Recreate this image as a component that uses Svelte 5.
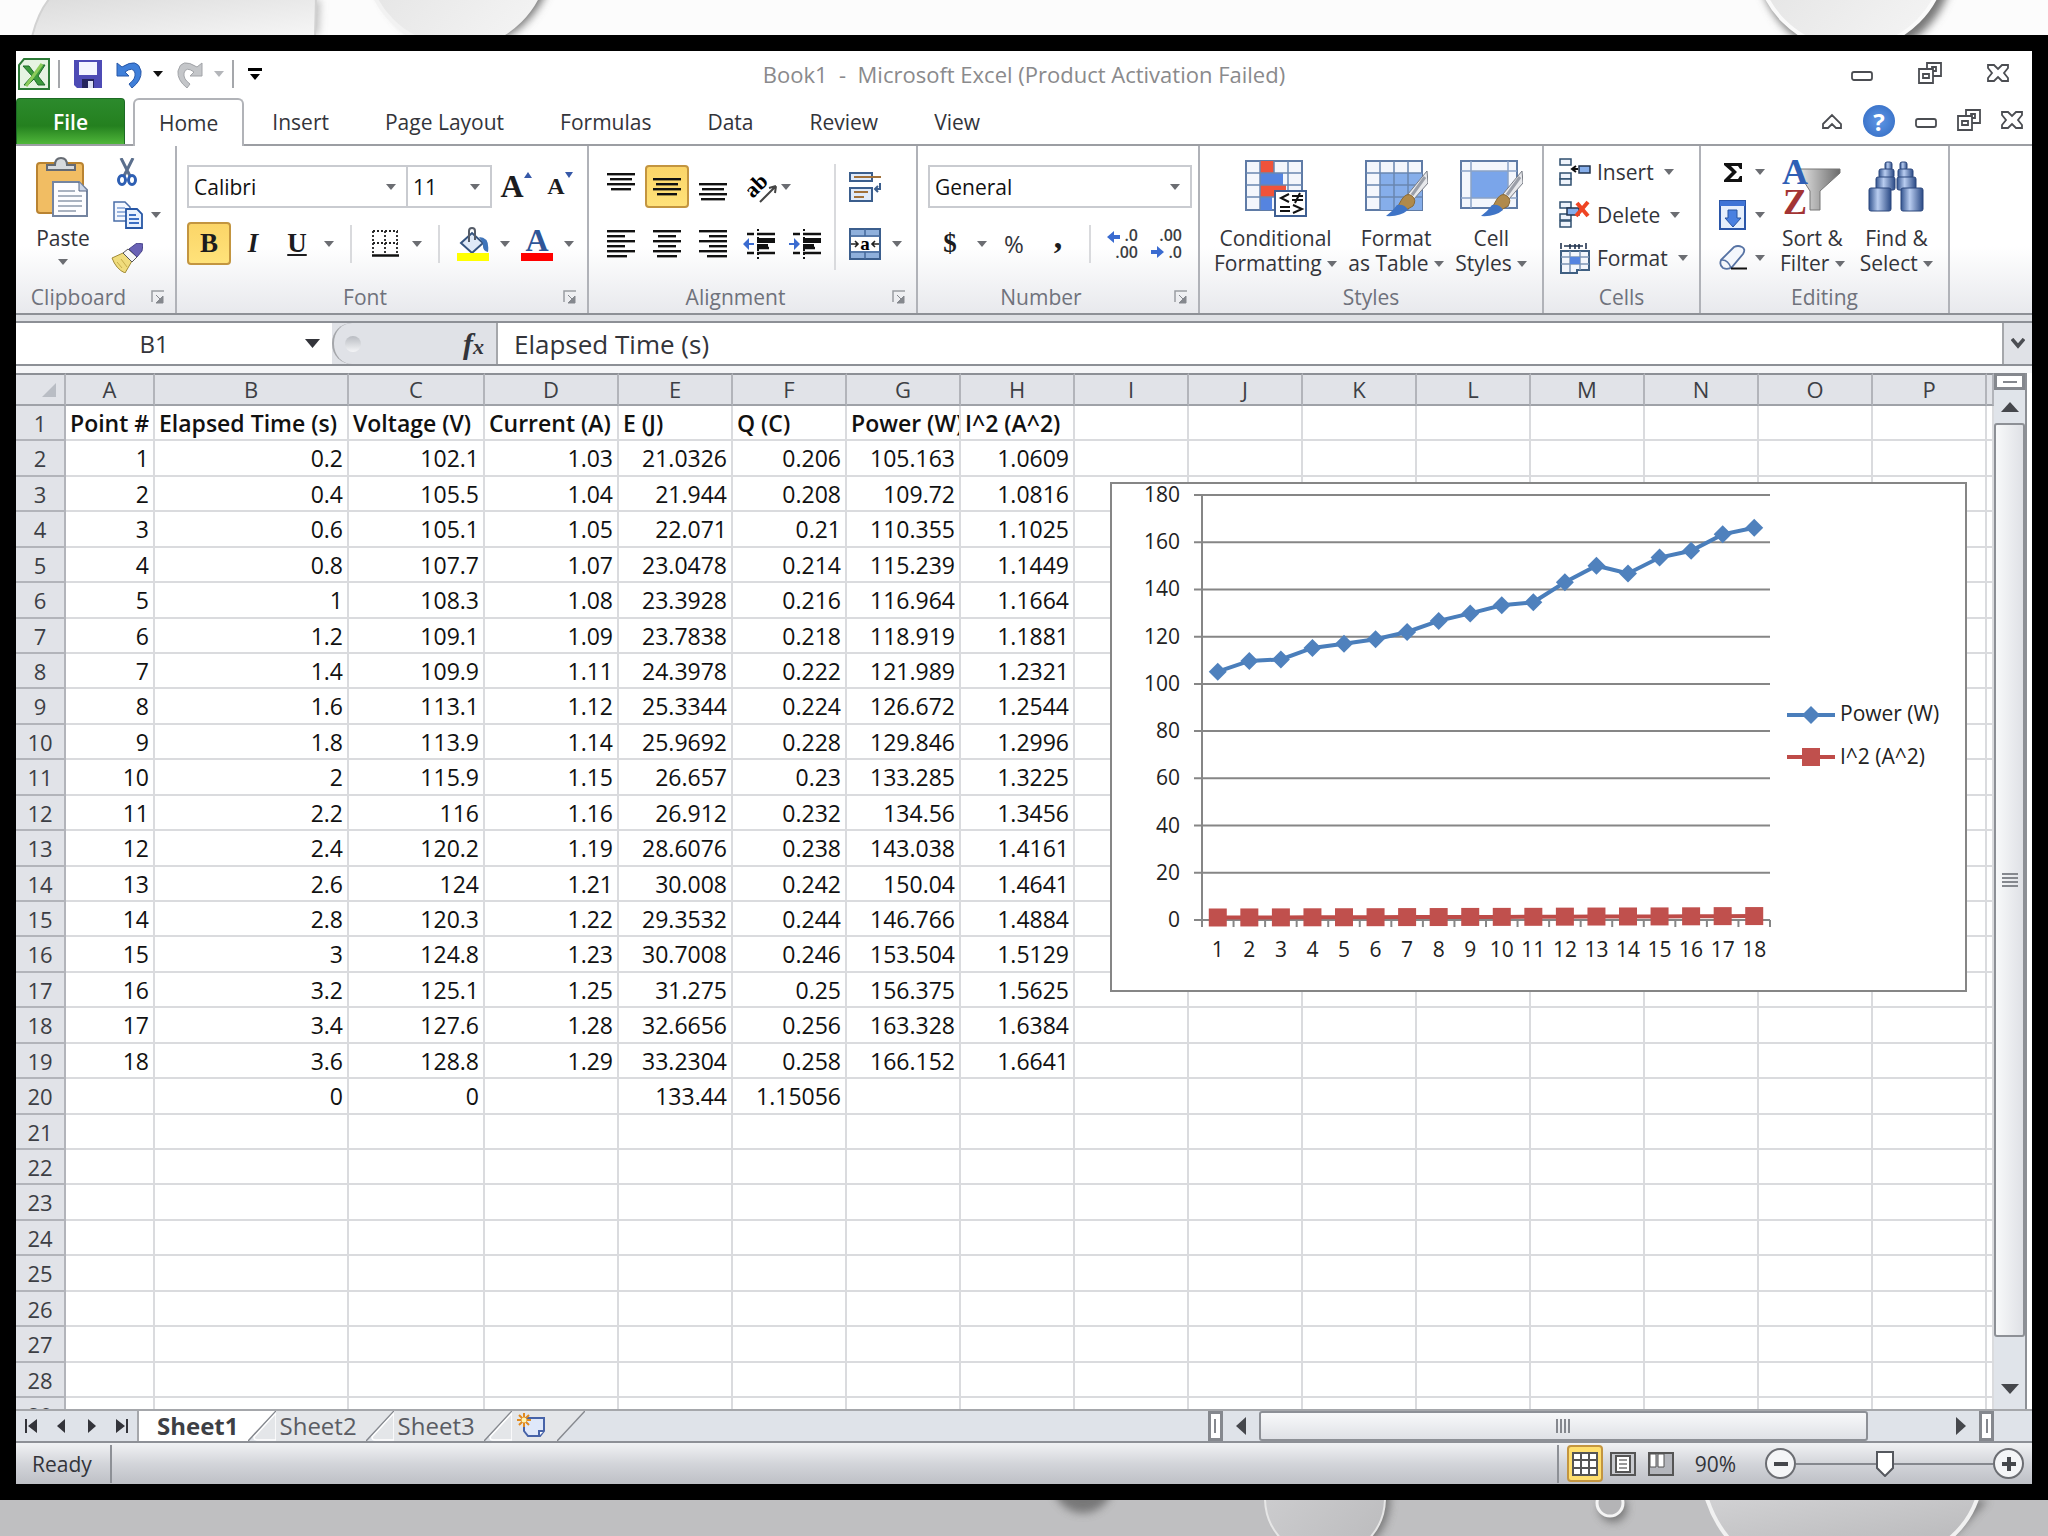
<script lang="ts">
	const menus = ['Home', 'Insert', 'Page Layout', 'Formulas', 'Data', 'Review', 'View'];
	const letters = 'ABCDEFGHIJKLMNOP'.split('');
	const headings = [
		'Point #',
		'Elapsed Time (s)',
		'Voltage (V)',
		'Current (A)',
		'E (J)',
		'Q (C)',
		'Power (W)',
		'I^2 (A^2)'
	];

	const readings: string[][] = [
		['1', '0.2', '102.1', '1.03', '21.0326', '0.206', '105.163', '1.0609'],
		['2', '0.4', '105.5', '1.04', '21.944', '0.208', '109.72', '1.0816'],
		['3', '0.6', '105.1', '1.05', '22.071', '0.21', '110.355', '1.1025'],
		['4', '0.8', '107.7', '1.07', '23.0478', '0.214', '115.239', '1.1449'],
		['5', '1', '108.3', '1.08', '23.3928', '0.216', '116.964', '1.1664'],
		['6', '1.2', '109.1', '1.09', '23.7838', '0.218', '118.919', '1.1881'],
		['7', '1.4', '109.9', '1.11', '24.3978', '0.222', '121.989', '1.2321'],
		['8', '1.6', '113.1', '1.12', '25.3344', '0.224', '126.672', '1.2544'],
		['9', '1.8', '113.9', '1.14', '25.9692', '0.228', '129.846', '1.2996'],
		['10', '2', '115.9', '1.15', '26.657', '0.23', '133.285', '1.3225'],
		['11', '2.2', '116', '1.16', '26.912', '0.232', '134.56', '1.3456'],
		['12', '2.4', '120.2', '1.19', '28.6076', '0.238', '143.038', '1.4161'],
		['13', '2.6', '124', '1.21', '30.008', '0.242', '150.04', '1.4641'],
		['14', '2.8', '120.3', '1.22', '29.3532', '0.244', '146.766', '1.4884'],
		['15', '3', '124.8', '1.23', '30.7008', '0.246', '153.504', '1.5129'],
		['16', '3.2', '125.1', '1.25', '31.275', '0.25', '156.375', '1.5625'],
		['17', '3.4', '127.6', '1.28', '32.6656', '0.256', '163.328', '1.6384'],
		['18', '3.6', '128.8', '1.29', '33.2304', '0.258', '166.152', '1.6641'],
		['', '0', '0', '', '133.44', '1.15056', '', '']
	];

	const rows = [headings, ...readings, ...Array.from({ length: 9 }, () => [] as string[])];

	let name = $state('B1');
	let formula = $state('Elapsed Time (s)');
	let zoom = $state(90);

	// chart geometry, in the chart's own coordinates
	const plot = { left: 92, right: 660, top: 13, bottom: 438 };
	const ticks = [180, 160, 140, 120, 100, 80, 60, 40, 20, 0];
	const points = readings.slice(0, 18).map((r) => ({ label: r[0], power: +r[6], current: +r[7] }));
	const step = (plot.right - plot.left) / points.length;
	const px = (i: number) => plot.left + step * (i + 0.5);
	const py = (v: number) => plot.bottom - (v / 180) * (plot.bottom - plot.top);
	const powerLine = points.map((p, i) => `${px(i)},${py(p.power)}`).join(' ');
	const currentLine = points.map((p, i) => `${px(i)},${py(p.current)}`).join(' ');
</script>

{#snippet caret(kind = '')}
	<svg class="caret {kind}" viewBox="0 0 10 6" width="10" height="6"><path d="M0 0h10L5 6z" /></svg>
{/snippet}

{#snippet launcher()}
	<button class="launcher" aria-label="More options">
		<svg viewBox="0 0 14 14" width="14" height="14">
			<path d="M1 12V1h12" fill="none" stroke="#9a9da3" stroke-width="1.5" />
			<path d="M5 5l6 6M12 6v7H5z" fill="#85888e" stroke="#85888e" />
		</svg>
	</button>
{/snippet}

{#snippet lines(widths: number[], align: string)}
	<svg viewBox="0 0 28 {widths.length * 5 - 2}" width="28" height={widths.length * 5 - 2}>
		{#each widths as w, i}
			<rect
				x={align === 'left' ? 0 : align === 'right' ? 28 - w : (28 - w) / 2}
				y={i * 5}
				width={w}
				height="2.4"
				fill="#111"
			/>
		{/each}
	</svg>
{/snippet}

{#snippet indent(flip: boolean)}
	<svg viewBox="0 0 32 30" width="32" height="30">
		<path d="M4 5h7M14 5h18M14 24h18M4 24h7M14 19h12" stroke="#111" stroke-width="2.4" />
		<path d="M14 9h18v5H14zM14 15h11v3H14z" fill="#111" />
		<path d="M15 0v30" stroke="#111" stroke-width="2" stroke-dasharray="2 2" />
		<path d={flip ? 'M0 14h5V9l6 6-6 6v-5H0z' : 'M11 14H6V9l-6 6 6 6v-5h5z'} fill="#3a6bd0" />
	</svg>
{/snippet}

{#snippet windowIcon(kind: string)}
	<svg viewBox="0 0 24 24" width="24" height="24" fill="#fff" stroke="#4b4d52" stroke-width="1.8">
		{#if kind === 'min'}
			<rect x="2" y="10" width="20" height="8" rx="2" />
		{:else if kind === 'restore'}
			<path d="M9 1h14v13H9z M14 5h4v4h-4z" />
			<path d="M1 7h14v14H1z M5 12h6v4H5z" />
		{:else if kind === 'close'}
			<path d="M2 3h6l4 4 4-4h6v3l-4 5 4 5v3h-6l-4-4-4 4H2v-3l4-5-4-5z" />
		{:else}
			<path d="M3 15l9-9 9 9v4h-5l-4-4-4 4H3z" />
		{/if}
	</svg>
{/snippet}

{#snippet brush()}
	<path d="M63 14l1 12-14 16-6-5z" fill="#e8e9ec" stroke="#777b84" />
	<path d="M61 20L48 38" stroke="#9b9fa8" stroke-width="3" />
	<path d="M38 42q5-7 10-3t1 10l-7 4-8-4z" fill="#b08a4c" stroke="#8a6a36" />
	<path d="M33 48q8-1 11 5-8 7-22 6 6-4 11-11z" fill="#3f74c6" />
{/snippet}

{#snippet cells(x: number, y: number)}
	<rect {x} {y} width="11" height="6" fill="#eef3fb" stroke="#2f4f6f" stroke-width="1.5" />
{/snippet}

<div class="desktop">
	<svg class="drops top" viewBox="0 0 2048 35" preserveAspectRatio="none">
		<defs>
			<filter id="soft" x="-20%" y="-20%" width="140%" height="140%"><feGaussianBlur stdDeviation="4" /></filter>
			<linearGradient id="drop" x1="0" y1="0" x2="1" y2="1">
				<stop offset="0" stop-color="#dcdcdc" />
				<stop offset="1" stop-color="#f6f6f6" />
			</linearGradient>
			<linearGradient id="darkdrop" x1="0" y1="0" x2="1" y2="1">
				<stop offset="0" stop-color="#d2d2d4" />
				<stop offset="1" stop-color="#bababc" />
			</linearGradient>
		</defs>
		<g filter="url(#soft)" fill="#777">
			<circle cx="463" cy="-42" r="90" />
			<circle cx="1856" cy="-40" r="98" />
			<path d="M300 0h20l-2 35h-24z" opacity=".5" />
		</g>
		<path d="M32 37Q38 12 50-2h266l-1 39z" fill="url(#drop)" stroke="#d2d2d2" stroke-width="2" />
		<circle cx="456" cy="-44" r="91" fill="url(#drop)" stroke="#f2f2f2" stroke-width="4" />
		<circle cx="1851" cy="-46" r="95" fill="url(#drop)" stroke="#fafafa" stroke-width="4" />
	</svg>

	<div class="window">
		<header class="titlebar">
			<div class="quick">
				<svg viewBox="0 0 32 32" width="32" height="32">
					<path d="M6 1h25v30H1V7z" fill="#e6f3e2" stroke="#2c7a36" stroke-width="2" />
					<path d="M5 8h6l6 8 6-9h4l-7 11 7 9h-7l-4-6-6 6H6l8-9z" fill="#3c9a3c" stroke="#1e6b2a" />
					<path d="M24 6L8 28" stroke="#8ccb5a" stroke-width="3" />
				</svg>
				<i class="bar"></i>
				<button aria-label="Save">
					<svg viewBox="0 0 28 28" width="28" height="28">
						<path d="M0 0h28v28H3l-3-3z" fill="#4d4bb5" />
						<path d="M5 2h18v13H5z" fill="#f3f5ff" />
						<path d="M8 19h12v9H8z" fill="#23245c" />
						<path d="M14 21h5v7h-5z" fill="#dde2f5" />
					</svg>
				</button>
				<button class="pair" aria-label="Undo">
					<svg viewBox="0 0 26 28" width="26" height="28">
						<path d="M1 3v13h12l-4-4q8-6 10 1 1 6-6 11l3 4q10-8 9-17Q22-3 6 7z" fill="#3f7fd9" stroke="#2858a8" />
					</svg>
					{@render caret('black')}
				</button>
				<button class="pair" aria-label="Redo">
					<svg viewBox="0 0 26 28" width="26" height="28">
						<path d="M25 3v13H13l4-4q-8-6-10 1-1 6 6 11l-3 4Q0 20 1 11 4-3 20 7z" fill="#c4c6c9" stroke="#a2a4a8" />
					</svg>
					{@render caret('pale')}
				</button>
				<i class="bar"></i>
				<button aria-label="Customize toolbar">
					<svg viewBox="0 0 14 14" width="14" height="14"><path d="M0 1h14v3H0zM2 7h10l-5 6z" /></svg>
				</button>
			</div>
			<h1>Book1&nbsp; -&nbsp; Microsoft Excel (Product Activation Failed)</h1>
			<div class="controls">
				<button aria-label="Minimize">{@render windowIcon('min')}</button>
				<button aria-label="Restore">{@render windowIcon('restore')}</button>
				<button aria-label="Close">{@render windowIcon('close')}</button>
			</div>
		</header>

		<nav class="tabs">
			<button class="file">File</button>
			{#each menus as menu, i}
				<button class="tab" class:active={i === 0}>{menu}</button>
			{/each}
			<div class="controls small">
				<button aria-label="Collapse ribbon">{@render windowIcon('up')}</button>
				<button class="help" aria-label="Help">?</button>
				<button aria-label="Minimize book">{@render windowIcon('min')}</button>
				<button aria-label="Restore book">{@render windowIcon('restore')}</button>
				<button aria-label="Close book">{@render windowIcon('close')}</button>
			</div>
		</nav>

		<div class="ribbon">
			<section class="group clipboard">
				<div class="body">
					<button class="big">
						<svg viewBox="0 0 54 60" width="54" height="60">
							<rect x="1" y="6" width="46" height="50" rx="3" fill="#f1bd63" stroke="#b98331" stroke-width="2" />
							<path d="M11 13V8h8q0-7 6-7t6 7h8v5z" fill="#d7dade" stroke="#666b73" stroke-width="2" />
							<path d="M17 25h26l8 8v26H17z" fill="#fdfdff" stroke="#7484a0" stroke-width="2" />
							<path d="M43 25v9h8" fill="#cbd6e8" stroke="#566582" />
							<path d="M22 34h17M22 39h24M22 44h24M22 49h24M22 54h18" stroke="#a9b2c0" stroke-width="2" />
						</svg>
						<span>Paste</span>
						{@render caret()}
					</button>
					<div class="stack">
						<button aria-label="Cut">
							<svg viewBox="0 0 20 28" width="20" height="28">
								<path d="M4 0l9 18M16 0L7 18" stroke="#5b6f8d" stroke-width="3" />
								<ellipse cx="5" cy="22" rx="3.5" ry="4.5" fill="none" stroke="#2e5fb3" stroke-width="3" />
								<ellipse cx="15" cy="22" rx="3.5" ry="4.5" fill="none" stroke="#2e5fb3" stroke-width="3" />
							</svg>
						</button>
						<button class="pair" aria-label="Copy">
							<svg viewBox="0 0 30 28" width="30" height="28">
								<path d="M1 1h11l5 5v14H1z" fill="#f4f8ff" stroke="#4a6da8" stroke-width="1.5" />
								<path d="M4 7h8M4 11h9M4 15h9" stroke="#7c9dd4" stroke-width="1.5" />
								<path d="M13 8h11l5 5v14H13z" fill="#e8f1ff" stroke="#2757a5" stroke-width="1.8" />
								<path d="M16 14h7M16 18h10M16 22h10" stroke="#3c6fc4" stroke-width="1.8" />
							</svg>
							{@render caret()}
						</button>
						<button aria-label="Format painter">
							<svg viewBox="0 0 32 30" width="32" height="30">
								<path d="M1 15l11-5 9 8-7 12Q5 26 1 15z" fill="#f0dc7c" stroke="#a08a38" />
								<path d="M6 19l5 6M10 16l6 8" stroke="#c7ae4c" />
								<path d="M12 10l5-4 9 8-5 5z" fill="#f7f7f7" stroke="#555" />
								<path d="M18 6l8-6 6 1-1 7-5 6z" fill="#6a62b5" stroke="#47438a" />
							</svg>
						</button>
					</div>
				</div>
				<footer><span>Clipboard</span>{@render launcher()}</footer>
			</section>

			<section class="group font">
				<div class="body rows">
					<div class="row">
						<label class="combo family">
							<select aria-label="Font"><option>Calibri</option></select>{@render caret()}
						</label>
						<label class="combo size">
							<select aria-label="Font size"><option>11</option></select>{@render caret()}
						</label>
						<button class="tool serif grow" aria-label="Grow font">A<svg viewBox="0 0 8 6" width="8" height="6"><path d="M0 6h8L4 0z" fill="#3659a8" /></svg></button>
						<button class="tool serif shrink" aria-label="Shrink font">A<svg viewBox="0 0 8 6" width="8" height="6"><path d="M0 0h8L4 6z" fill="#3659a8" /></svg></button>
					</div>
					<div class="row">
						<button class="tool serif on">B</button>
						<button class="tool serif italic">I</button>
						<button class="tool serif under">U</button>
						<button class="drop" aria-label="Underline style">{@render caret()}</button>
						<i class="sep"></i>
						<button class="tool" aria-label="Borders">
							<svg viewBox="0 0 27 27" width="27" height="27">
								<path d="M1 1h25M1 13h25M1 1v24M13 1v24M25 1v24" stroke="#222" stroke-width="1.8" stroke-dasharray="2 2" />
								<path d="M0 25.500h27" stroke="#111" stroke-width="2.500" />
							</svg>
						</button>
						<button class="drop" aria-label="Border style">{@render caret()}</button>
						<i class="sep"></i>
						<button class="tool" aria-label="Fill colour">
							<svg viewBox="0 0 32 34" width="32" height="34">
								<path d="M4 16L15 6l11 10-11 10z" fill="#dfe9f7" stroke="#35547f" stroke-width="2" />
								<path d="M12 15V4q0-3 3-3t3 3v9" fill="none" stroke="#555c68" stroke-width="2" />
								<path d="M22 10q11 0 9 15-6-1-5-9z" fill="#3f74b9" />
								<path d="M0 26h32v8H0z" fill="#ff0" />
							</svg>
						</button>
						<button class="drop" aria-label="Fill palette">{@render caret()}</button>
						<button class="tool serif color"><span>A</span></button>
						<button class="drop" aria-label="Font palette">{@render caret()}</button>
					</div>
				</div>
				<footer><span>Font</span>{@render launcher()}</footer>
			</section>

			<section class="group alignment">
				<div class="body">
					<div class="rows">
						<div class="row gap">
							<button class="tool high" aria-label="Top align">{@render lines([28, 22, 28, 20], 'center')}</button>
							<button class="tool on" aria-label="Middle align">{@render lines([28, 22, 28, 20], 'center')}</button>
							<button class="tool low" aria-label="Bottom align">{@render lines([28, 22, 28, 24], 'center')}</button>
							<button class="tool wide" aria-label="Orientation">
								<svg viewBox="0 0 32 32" width="32" height="32">
									<text x="0" y="22" transform="rotate(-45 10 18)" font-family="Liberation Serif" font-weight="bold" font-size="22">ab</text>
									<path d="M13 31L29 15M29 15l-7 2M29 15l-1 7" fill="none" stroke="#444" stroke-width="2" />
								</svg>
								{@render caret()}
							</button>
						</div>
						<div class="row gap">
							<button class="tool" aria-label="Align left">{@render lines([28, 18, 28, 18, 28, 20], 'left')}</button>
							<button class="tool" aria-label="Center">{@render lines([28, 18, 28, 18, 28, 20], 'center')}</button>
							<button class="tool" aria-label="Align right">{@render lines([28, 18, 28, 18, 28, 20], 'right')}</button>
							<button class="tool" aria-label="Decrease indent">{@render indent(false)}</button>
							<button class="tool" aria-label="Increase indent">{@render indent(true)}</button>
						</div>
					</div>
					<i class="sep tall"></i>
					<div class="rows">
						<div class="row">
							<button class="tool" aria-label="Wrap text">
								<svg viewBox="0 0 32 32" width="32" height="32">
									<path d="M1 2h22v8H1zM1 17h22v13H1z" fill="#dfeafa" stroke="#3b5e8d" stroke-width="2" />
									<path d="M5 6h27M5 21h14M5 26h10" stroke="#a0703a" stroke-width="2" />
									<path d="M31 12v6h-4M29 15l-3 3 3 3" fill="none" stroke="#3b5e8d" stroke-width="2" />
								</svg>
							</button>
						</div>
						<div class="row">
							<button class="tool" aria-label="Merge and center">
								<svg viewBox="0 0 32 32" width="32" height="32">
									<path d="M1 1h30v30H1z" fill="#8fb0dc" stroke="#3b5e8d" stroke-width="2" />
									<path d="M2 9h28v14H2z" fill="#fff" />
									<path d="M1 8h30M1 24h30M16 1v7M16 24v7" stroke="#45689a" stroke-width="1.5" />
									<path d="M2 16h7M6 13l3 3-3 3M30 16h-7M26 13l-3 3 3 3" fill="none" stroke="#222" stroke-width="1.6" />
									<text x="16" y="22" text-anchor="middle" font-family="Liberation Serif" font-weight="bold" font-size="19">a</text>
								</svg>
							</button>
							<button class="drop" aria-label="Merge options">{@render caret()}</button>
						</div>
					</div>
				</div>
				<footer><span>Alignment</span>{@render launcher()}</footer>
			</section>

			<section class="group number">
				<div class="body rows">
					<div class="row">
						<label class="combo format">
							<select aria-label="Number format"><option>General</option></select>{@render caret()}
						</label>
					</div>
					<div class="row">
						<button class="tool serif">$</button>
						<button class="drop" aria-label="Currency">{@render caret()}</button>
						<button class="tool percent">%</button>
						<button class="tool serif comma">,</button>
						<i class="sep"></i>
						<button class="tool" aria-label="Increase decimal">
							<svg viewBox="0 0 32 30" width="32" height="30" class="decimals">
								<text x="32" y="12" text-anchor="end">.0</text>
								<text x="32" y="29" text-anchor="end">.00</text>
								<path d="M14 6H8V2L1 8l7 6v-4h6z" fill="#3a6bd0" />
							</svg>
						</button>
						<button class="tool" aria-label="Decrease decimal">
							<svg viewBox="0 0 32 30" width="32" height="30" class="decimals">
								<text x="32" y="12" text-anchor="end">.00</text>
								<text x="32" y="29" text-anchor="end">.0</text>
								<path d="M1 21h6v-4l7 6-7 6v-4H1z" fill="#3a6bd0" />
							</svg>
						</button>
					</div>
				</div>
				<footer><span>Number</span>{@render launcher()}</footer>
			</section>

			<section class="group styles">
				<div class="body">
					<button class="big">
						<svg viewBox="0 0 64 60" width="64" height="60">
							<path d="M2 4h56v49H2z" fill="#f3f6fc" stroke="#5f7ba6" stroke-width="2" />
							<path d="M16 4h14v12H16zM16 28h26v12H16z" fill="#f0533a" />
							<path d="M16 16h23v12H16zM16 40h12v13H16z" fill="#5584e0" />
							<path d="M2 16h56M2 28h56M2 40h56M16 4v49M30 4v12M44 4v49" stroke="#6a86b0" stroke-width="1.5" />
							<path d="M31 34h31v25H31z" fill="#fff" stroke="#3f5f92" stroke-width="2" />
							<path d="M45 37l-8 4 8 4M48 39h11M48 43h11M56 36l-5 10M36 50h10M36 54h10M49 48l9 4-9 4" fill="none" stroke="#111" stroke-width="2" />
						</svg>
						<span>Conditional<br />Formatting {@render caret()}</span>
					</button>
					<button class="big">
						<svg viewBox="0 0 64 60" width="64" height="60">
							<path d="M2 4h56v49H2z" fill="#f3f6fc" stroke="#5f7ba6" stroke-width="2" />
							<path d="M16 16h42v37H16z" fill="#86aeea" />
							<path d="M2 16h56M2 28h56M2 40h56M16 4v49M30 4v49M44 4v49" stroke="#6a86b0" stroke-width="1.5" />
							{@render brush()}
						</svg>
						<span>Format<br />as Table {@render caret()}</span>
					</button>
					<button class="big">
						<svg viewBox="0 0 64 60" width="64" height="60">
							<path d="M2 4h56v47H2z" fill="#f3f6fc" stroke="#5f7ba6" stroke-width="2" />
							<path d="M12 14h37v27H12z" fill="#7aa5ea" />
							<path d="M2 14h56M2 41h56M12 4v47M49 4v47" stroke="#8aa2c6" stroke-width="1.5" />
							{@render brush()}
						</svg>
						<span>Cell<br />Styles {@render caret()}</span>
					</button>
				</div>
				<footer><span>Styles</span></footer>
			</section>

			<section class="group cells">
				<div class="body stack">
					<button class="line">
						<svg viewBox="0 0 32 30" width="32" height="30">
							{@render cells(1, 2)}
							{@render cells(1, 16)}
							{@render cells(1, 22)}
							<path d="M13 12h6M17 9l-4 3 4 3" fill="none" stroke="#111" stroke-width="2" />
							<path d="M20 9h11v7H20z" fill="#86aeea" stroke="#22344f" stroke-width="1.5" />
						</svg>
						Insert {@render caret()}
					</button>
					<button class="line">
						<svg viewBox="0 0 32 30" width="32" height="30">
							{@render cells(1, 2)}
							{@render cells(1, 14)}
							{@render cells(1, 21)}
							<path d="M8 8h12v7H8z" fill="#86aeea" stroke="#22344f" stroke-width="1.5" />
							<path d="M18 3l11 13M29 2L17 16" stroke="#ef4423" stroke-width="4" />
						</svg>
						Delete {@render caret()}
					</button>
					<button class="line">
						<svg viewBox="0 0 32 32" width="32" height="32">
							<path d="M2 1v6M27 1v6M5 4h19M11 2v5M16 2v5M20 2v5" stroke="#22344f" stroke-width="1.6" />
							<path d="M2 9h28v19H18v3H2z" fill="#f3f6fc" stroke="#3f5f82" stroke-width="2" />
							<path d="M2 15h28M2 22h28M11 9v21M21 9v19" stroke="#7d95b5" stroke-width="1.500" />
							<path d="M11 15h10v7H11z" fill="#5584e0" />
						</svg>
						Format {@render caret()}
					</button>
				</div>
				<footer><span>Cells</span></footer>
			</section>

			<section class="group editing">
				<div class="body">
					<div class="stack">
						<button class="pair" aria-label="Sum">
							<svg viewBox="0 0 28 30" width="28" height="30">
								<path d="M5 6h18v6h-2l-2-3h-7l6 6-7 7h8l2-3h2v6H5v-2l8-8-8-7z" fill="#111" />
							</svg>
							{@render caret()}
						</button>
						<button class="pair" aria-label="Fill">
							<svg viewBox="0 0 28 30" width="28" height="30">
								<path d="M1 1h25v28H1z" fill="#e6effc" stroke="#2b56a8" stroke-width="2" />
								<path d="M1 1h25v5H1z" fill="#3f74d6" />
								<path d="M9 10h9v8h4l-8 9-8-9h3z" fill="#4a80e0" stroke="#27529e" />
							</svg>
							{@render caret()}
						</button>
						<button class="pair" aria-label="Clear">
							<svg viewBox="0 0 28 30" width="28" height="30">
								<path d="M2 17L15 4q4-2 8 0 4 2 1 7L13 24q-4 3-9 1-4-3-2-8z" fill="#f4f7fc" stroke="#5672a3" stroke-width="1.8" />
								<path d="M2 17q7-1 10 8" fill="none" stroke="#5672a3" stroke-width="1.500" />
								<path d="M12 25.500h16" stroke="#111" stroke-width="2" />
							</svg>
							{@render caret()}
						</button>
					</div>
					<button class="big">
						<svg viewBox="0 0 60 60" width="60" height="60">
							<defs>
								<linearGradient id="steel"><stop offset="0" stop-color="#eee" /><stop offset="1" stop-color="#6b6b6b" /></linearGradient>
							</defs>
							<path d="M14 12h44v4L38 34v19H28V34z" fill="url(#steel)" stroke="#777" />
							<text x="13" y="27" text-anchor="middle" font-family="Liberation Serif" font-weight="bold" font-size="36" fill="#2f5fb5">A</text>
							<text x="13" y="57" text-anchor="middle" font-family="Liberation Serif" font-weight="bold" font-size="36" fill="#a33434">Z</text>
						</svg>
						<span>Sort &amp;<br />Filter {@render caret()}</span>
					</button>
					<button class="big">
						<svg viewBox="0 0 60 60" width="60" height="60">
							<defs>
								<linearGradient id="lens"><stop offset="0" stop-color="#33548f" /><stop offset=".4" stop-color="#b9cdf0" /><stop offset="1" stop-color="#2b4a85" /></linearGradient>
							</defs>
							{#each [3, 35] as x, i}
								<g fill="url(#lens)" stroke="#2b467c">
									<rect x={i ? 34 : 19} y="5" width="7" height="8" rx="2" />
									<rect x={i ? 32 : 13} y="12" width="15" height="9" rx="2" />
									<rect x={i ? 31 : 10} y="20" width="19" height="13" rx="2" />
									<rect {x} y="31" width="22" height="23" rx="2" />
								</g>
							{/each}
						</svg>
						<span>Find &amp;<br />Select {@render caret()}</span>
					</button>
				</div>
				<footer><span>Editing</span></footer>
			</section>
		</div>

		<div class="formulabar">
			<div class="namebox">
				<input aria-label="Name box" bind:value={name} />
				<button aria-label="Names">{@render caret('dark')}</button>
			</div>
			<div class="fx">
				<i class="knob"></i>
				<button aria-label="Insert function"><b>f</b><small>x</small></button>
			</div>
			<input class="formula" aria-label="Formula" bind:value={formula} />
			<button class="expand" aria-label="Expand formula bar">
				<svg viewBox="0 0 14 11" width="14" height="11"><path d="M1 1l6 7 6-7" fill="none" stroke="#4b4d52" stroke-width="3.500" /></svg>
			</button>
		</div>

		<main class="sheet">
			<div class="viewport">
				<table>
					<colgroup>
						<col class="gutter" /><col class="a" /><col class="b" /><col class="c" /><col class="d" />
						{#each letters.slice(4) as _}<col class="plain" />{/each}
						<col />
					</colgroup>
					<thead>
						<tr>
							<th class="corner" aria-label="Select all"><svg viewBox="0 0 14 14" width="14" height="14"><path d="M14 0v14H0z" fill="#b9bdc4" /></svg></th>
							{#each letters as letter}<th scope="col">{letter}</th>{/each}
							<th></th>
						</tr>
					</thead>
					<tbody>
						{#each rows as row, r}
							<tr class:bold={r === 0}>
								<th scope="row">{r + 1}</th>
								{#each letters as _, c}<td>{row[c] ?? ''}</td>{/each}
								<td></td>
							</tr>
						{/each}
						<tr><th scope="row">29</th>{#each letters as _}<td></td>{/each}<td></td></tr>
					</tbody>
				</table>

				<svg class="chart" viewBox="0 0 857 510" width="857" height="510">
					<rect x="1" y="1" width="855" height="508" fill="#fff" stroke="#868686" stroke-width="2" />
					<g stroke="#868686" stroke-width="2">
						{#each ticks as t}<path d="M{plot.left - 8} {py(t)}H{plot.right}" />{/each}
						<path d="M{plot.left} {plot.top}V{plot.bottom}" />
						{#each [...points, null] as _, i}<path d="M{plot.left + step * i} {plot.bottom}v7" />{/each}
					</g>
					{#each ticks as t}<text x="70" y={py(t) + 7} text-anchor="end">{t}</text>{/each}
					{#each points as p, i}<text x={px(i)} y="475" text-anchor="middle">{p.label}</text>{/each}
					<polyline points={powerLine} fill="none" stroke="#4a7ebb" stroke-width="4" />
					<polyline points={currentLine} fill="none" stroke="#be4b48" stroke-width="4" />
					{#each points as p, i}
						<path d="M{px(i)} {py(p.power) - 9}l9 9-9 9-9-9z" fill="#4f81bd" />
						<rect x={px(i) - 9} y={py(p.current) - 9} width="18" height="18" fill="#c0504d" />
					{/each}
					<path d="M677 233h48" stroke="#4a7ebb" stroke-width="4" />
					<path d="M701 224l9 9-9 9-9-9z" fill="#4f81bd" />
					<text x="730" y="239">Power (W)</text>
					<path d="M677 275h48" stroke="#be4b48" stroke-width="4" />
					<rect x="692" y="266" width="18" height="18" fill="#c0504d" />
					<text x="730" y="282">I^2 (A^2)</text>
				</svg>
			</div>
			<div class="vscroll">
				<i class="split"></i>
				<button aria-label="Scroll up"><svg viewBox="0 0 18 10" width="18" height="10"><path d="M0 10h18L9 0z" fill="#45474c" /></svg></button>
				<div class="thumb"><i></i><i></i><i></i><i></i></div>
				<button class="down" aria-label="Scroll down"><svg viewBox="0 0 18 10" width="18" height="10"><path d="M0 0h18L9 10z" fill="#45474c" /></svg></button>
			</div>
			<div class="edge"></div>
		</main>

		<div class="sheetbar">
			<div class="steps">
				<button aria-label="First sheet"><svg viewBox="0 0 14 14" width="14" height="14"><path d="M1 0h2v14H1zM13 0v14L4 7z" /></svg></button>
				<button aria-label="Previous sheet"><svg viewBox="0 0 14 14" width="14" height="14"><path d="M11 0v14L3 7z" /></svg></button>
				<button aria-label="Next sheet"><svg viewBox="0 0 14 14" width="14" height="14"><path d="M3 0v14l8-7z" /></svg></button>
				<button aria-label="Last sheet"><svg viewBox="0 0 14 14" width="14" height="14"><path d="M11 0h2v14h-2zM1 0v14l9-7z" /></svg></button>
			</div>
			{#each ['Sheet1', 'Sheet2', 'Sheet3', ''] as sheet, i}
				<button class="sheettab" class:current={i === 0} aria-label={sheet || 'Insert sheet'}>
					{#if sheet}
						{sheet}
					{:else}
						<svg viewBox="0 0 32 26" width="32" height="26">
							<path d="M8 5h20v13l-4 5H12l-4-5z" fill="#dfe8fa" stroke="#4763a8" stroke-width="2" />
							<path d="M28 18h-5v5" fill="#fff" stroke="#4763a8" stroke-width="2" />
							<path d="M8 0v14M1 7h14M3 2l10 10M13 2L3 12" stroke="#e08a1e" stroke-width="2" />
							<circle cx="8" cy="7" r="2.500" fill="#fff3b0" />
						</svg>
					{/if}
				</button>
				<svg class="slant" viewBox="0 0 28 30" width="28" height="30">
					<path d="M0 0h28L0 30z" fill={i === 0 ? '#fff' : '#e4e6e9'} />
					<path d="M28 0L0 30" stroke="#85888e" stroke-width="1.500" />
					{#if i < 3}<path d="M28 2L6 26q0 3 3 3h19z" fill="#e4e6e9" stroke="#fff" stroke-width="1.500" />{/if}
				</svg>
			{/each}
			<div class="hscroll">
				<i class="split"></i>
				<button aria-label="Scroll left"><svg viewBox="0 0 10 18" width="10" height="18"><path d="M10 0v18L0 9z" fill="#45474c" /></svg></button>
				<div class="track"><div class="thumb"><i></i><i></i><i></i><i></i></div></div>
				<button aria-label="Scroll right"><svg viewBox="0 0 10 18" width="10" height="18"><path d="M0 0v18l10-9z" fill="#45474c" /></svg></button>
				<i class="split"></i>
			</div>
		</div>

		<div class="status">
			<span class="ready">Ready</span>
			<i class="bar"></i>
			<div class="views">
				<i class="bar"></i>
				<button class="on" aria-label="Normal view">
					<svg viewBox="0 0 26 24" width="26" height="24"><path d="M1 1h24v22H1z" fill="#fff" /><path d="M1 1h24v22H1zM9 1v22M17 1v22M1 8h24M1 16h24" fill="none" stroke="#555" stroke-width="2" /></svg>
				</button>
				<button aria-label="Page layout view">
					<svg viewBox="0 0 26 24" width="26" height="24"><path d="M1 1h24v22H1z" fill="#c9cbd0" stroke="#555" stroke-width="2" /><path d="M6 4h14v16H6z" fill="#fff" stroke="#555" stroke-width="2" /><path d="M9 8h8M9 12h8M9 16h8" stroke="#777" stroke-width="1.500" /></svg>
				</button>
				<button aria-label="Page break view">
					<svg viewBox="0 0 26 24" width="26" height="24"><path d="M1 1h24v22H1z" fill="#b4b6bc" stroke="#555" stroke-width="2" /><path d="M2 2h6v13H2zM10 2h6v13h-6z" fill="#fff" stroke="#555" /></svg>
				</button>
			</div>
			<span class="percentage">{zoom}%</span>
			<button class="round" aria-label="Zoom out"><svg viewBox="0 0 14 14" width="14" height="14"><path d="M0 5h14v4H0z" fill="#45474c" /></svg></button>
			<input type="range" min="10" max="190" aria-label="Zoom" bind:value={zoom} />
			<button class="round" aria-label="Zoom in"><svg viewBox="0 0 14 14" width="14" height="14"><path d="M0 5h14v4H0zM5 0h4v14H5z" fill="#45474c" /></svg></button>
		</div>
	</div>

	<svg class="drops bottom" viewBox="0 0 2048 36" preserveAspectRatio="none">
		<g filter="url(#soft)" fill="#666" opacity=".8">
			<circle cx="1332" cy="0" r="58" />
			<circle cx="1083" cy="-17" r="30" />
			<circle cx="1613" cy="8" r="14" />
			<path d="M1724 0h264l-38 40h-190z" />
		</g>
		<circle cx="1325" cy="-2" r="60" fill="url(#darkdrop)" stroke="#e6e6e6" stroke-width="2" />
		<circle cx="1610" cy="3" r="13" fill="#b4b4b6" stroke="#f4f4f4" stroke-width="3" />
		<path d="M1706-4h272q-8 26-30 44h-218q-16-18-24-44z" fill="url(#darkdrop)" stroke="#f1f1f1" stroke-width="4" />
	</svg>
</div>

<style>
	:global(body) {
		margin: 0;
	}

	.desktop {
		display: flex;
		flex-direction: column;
		height: 100vh;
		background: linear-gradient(#fcfcfc 50%, #bfbfc1 96%);
		font-family: 'Open Sans', 'Noto Sans', sans-serif;
		font-size: 21px;
		color: #33343a;
	}
	.drops {
		display: block;
		width: 100%;
		flex: none;
	}
	.drops.top {
		height: 35px;
	}
	.drops.bottom {
		height: 36px;
	}

	.window {
		flex: 1;
		min-height: 0;
		display: flex;
		flex-direction: column;
		border: 16px solid #000;
		background: #fff;
	}

	button,
	input,
	select {
		font: inherit;
		color: inherit;
		border: 0;
		padding: 0;
		margin: 0;
		background: none;
	}
	svg {
		flex: none;
	}
	button {
		display: flex;
		align-items: center;
		justify-content: center;
	}
	.caret {
		fill: #6b6d72;
	}
	.caret.black {
		fill: #111;
	}
	.caret.pale {
		fill: #b4b6ba;
	}
	.caret.dark {
		fill: #33343a;
		width: 15px;
		height: 9px;
	}

	.titlebar {
		display: grid;
		grid-template-columns: 1fr auto 1fr;
		align-items: center;
		height: 46px;
		padding-bottom: 1px;
	}
	.quick {
		display: flex;
		align-items: center;
		gap: 14px;
		padding-left: 2px;
	}
	.quick .pair {
		gap: 11px;
	}
	.bar {
		width: 2px;
		height: 28px;
		background: #a5a7ab;
	}
	.titlebar .bar {
		margin: 0 -6px;
	}
	.titlebar .bar + button {
		margin-left: 6px;
	}
	h1 {
		margin: 0;
		font-size: 22px;
		font-weight: 400;
		line-height: 30px;
		color: #8a8a8c;
	}
	.controls {
		display: flex;
		justify-content: flex-end;
		align-items: center;
		gap: 44px;
		padding-right: 22px;
	}
	.controls.small {
		margin-left: auto;
		gap: 19px;
		padding-right: 8px;
	}
	.help {
		width: 32px;
		height: 32px;
		border-radius: 50%;
		background: radial-gradient(#5f97e6, #2f68c0);
		color: #fff;
		font-size: 24px;
		font-weight: 700;
	}

	.tabs {
		display: flex;
		height: 46px;
		border-bottom: 2px solid #9c9ea3;
	}
	.tabs > button {
		height: 46px;
	}
	.file {
		width: 109px;
		margin-right: 8px;
		border: 1px solid #1d6b25;
		border-bottom: 0;
		border-radius: 4px 4px 0 0;
		background: linear-gradient(#2c8a2c, #24801f 60%, #4fb63a);
		color: #fff;
		font-weight: 600;
	}
	.tab {
		padding: 0 26px;
		border: 2px solid transparent;
		border-bottom: 0;
	}
	.tabs .tab.active {
		height: 48px;
		padding: 0 24px;
		border-color: #b1b3b8;
		border-radius: 6px 6px 0 0;
		background: #fff;
	}

	.ribbon {
		display: flex;
		height: 167px;
		border-bottom: 2px solid #8d9096;
		background: linear-gradient(#fff 60%, #e8e9ed);
	}
	.group {
		display: flex;
		flex-direction: column;
		box-sizing: border-box;
		border-right: 2px solid #b0b2b8;
	}
	.clipboard {
		width: 161px;
	}
	.font {
		width: 412px;
	}
	.alignment {
		width: 329px;
	}
	.number {
		width: 282px;
	}
	.styles {
		width: 344px;
	}
	.cells {
		width: 157px;
	}
	.editing {
		width: 249px;
	}
	.body {
		flex: 1;
		display: flex;
	}
	.group footer {
		display: flex;
		align-items: center;
		height: 33px;
		color: #6f727c;
	}
	.group footer span {
		flex: 1;
		text-align: center;
	}
	.launcher {
		width: 34px;
		height: 34px;
	}
	.rows {
		display: flex;
		flex-direction: column;
		gap: 14px;
		padding-top: 19px;
	}
	.row {
		display: flex;
		align-items: center;
		height: 43px;
	}
	.row.gap {
		gap: 2px;
	}
	.font .body,
	.alignment .body,
	.number .body {
		padding-left: 10px;
	}
	.tool {
		box-sizing: border-box;
		width: 44px;
		height: 43px;
	}
	.tool.on {
		border: 2px solid #c39540;
		border-radius: 4px;
		background: linear-gradient(#fbd568, #ffe27a);
	}
	.tool.high {
		align-items: flex-start;
		padding-top: 8px;
	}
	.tool.low {
		align-items: flex-end;
		padding-bottom: 7px;
	}
	.tool.wide {
		width: 64px;
		gap: 2px;
	}
	.drop {
		width: 20px;
		height: 43px;
	}
	.sep {
		width: 2px;
		height: 38px;
		margin: 0 11px;
		background: #d9dadd;
	}
	.number .sep {
		margin: 0 9px;
	}
	.sep.tall {
		height: 106px;
		margin: 18px 7px 0;
	}
	.serif {
		font-family: 'Liberation Serif', serif;
		font-size: 27px;
		font-weight: 700;
		color: #1c1c1e;
	}
	.italic {
		font-style: italic;
	}
	.under {
		text-decoration: underline;
	}
	.percent {
		font-size: 24px;
	}
	.comma {
		font-size: 34px;
		padding-bottom: 14px;
	}
	.grow {
		width: 48px;
		font-size: 32px;
	}
	.shrink {
		width: 40px;
		font-size: 24px;
	}
	.grow svg,
	.shrink svg {
		align-self: flex-start;
		margin-top: 7px;
	}
	.color {
		font-size: 32px;
		color: #2f5597;
	}
	.color span {
		height: 34px;
		padding: 0 4px;
		line-height: 26px;
		box-sizing: border-box;
		border-bottom: 8px solid #f00;
	}
	.decimals {
		overflow: visible;
		font-size: 16px;
		font-weight: 600;
		fill: #3c3d42;
	}

	.combo {
		display: flex;
		align-items: center;
		box-sizing: border-box;
		height: 43px;
		padding-right: 10px;
		border: 2px solid #c9cbd0;
		background: #fff;
		color: #111;
	}
	.combo select {
		flex: 1;
		min-width: 0;
		height: 39px;
		padding-left: 5px;
		appearance: none;
		outline: none;
	}
	.family {
		width: 221px;
	}
	.size {
		width: 84px;
		border-left: 0;
	}
	.format {
		width: 264px;
	}

	.big {
		flex-direction: column;
		justify-content: flex-start;
		padding-top: 11px;
		line-height: 25px;
	}
	.big span {
		margin-top: 9px;
		white-space: nowrap;
	}
	.big span .caret {
		margin-bottom: 4px;
	}
	.clipboard .big {
		width: 94px;
	}
	.clipboard .big span + .caret {
		margin-top: 8px;
	}
	.styles .body {
		gap: 10px;
		padding-left: 14px;
	}
	.styles .big:nth-child(2) {
		width: 98px;
	}
	.stack {
		display: flex;
		flex-direction: column;
		align-items: flex-start;
		padding-top: 4px;
	}
	.stack button {
		height: 43px;
		min-width: 34px;
	}
	.stack .pair {
		gap: 8px;
	}
	.clipboard .stack .pair {
		padding-left: 3px;
	}
	.cells .stack {
		padding-left: 15px;
	}
	.line {
		gap: 6px;
	}
	.line .caret {
		margin-left: 4px;
	}
	.editing .body {
		gap: 15px;
	}
	.editing .stack {
		padding-left: 18px;
	}

	.formulabar {
		display: flex;
		height: 41px;
		padding: 8px 0 9px;
		background: linear-gradient(#dfe1e5 6px, #8d9096 6px, #8d9096 8px, #e0e2e7 8px, #e0e2e7 49px, #8d9096 49px, #8d9096 51px, #f5f6f8 51px);
	}
	.namebox {
		display: flex;
		width: 316px;
		background: #fff;
		font-size: 24px;
	}
	.namebox input {
		flex: 1;
		min-width: 0;
		text-align: center;
	}
	.namebox button {
		width: 40px;
	}
	.fx {
		box-sizing: border-box;
		display: flex;
		align-items: center;
		justify-content: space-between;
		width: 166px;
		padding: 0 12px 0 11px;
		border-left: 2px solid #a5a7ab;
		border-right: 2px solid #a5a7ab;
		border-radius: 20px 0 0 20px;
		background: #e0e2e7;
	}
	.knob {
		width: 16px;
		height: 16px;
		border-radius: 50%;
		background: linear-gradient(#b9bcc2, #f4f5f7);
	}
	.fx button {
		align-items: baseline;
		font-family: 'Liberation Serif', serif;
		font-style: italic;
		font-size: 30px;
	}
	.fx small {
		font-size: 22px;
		font-weight: 700;
	}
	.formula {
		flex: 1;
		padding-left: 16px;
		background: #fff;
		font-size: 26px;
		outline: none;
	}
	.expand {
		width: 30px;
		border-left: 2px solid #a5a7ab;
	}

	.sheet {
		flex: 1;
		min-height: 0;
		display: flex;
	}
	.viewport {
		position: relative;
		flex: 1;
		min-width: 0;
		overflow: hidden;
	}
	table {
		width: 100%;
		table-layout: fixed;
		border-collapse: separate;
		border-spacing: 0;
		font-size: 23px;
		line-height: 32px;
		color: #111;
	}
	.gutter {
		width: 50px;
	}
	.a {
		width: 89px;
	}
	.b {
		width: 194px;
	}
	.c {
		width: 136px;
	}
	.d {
		width: 134px;
	}
	.plain {
		width: 114px;
	}
	th,
	td {
		box-sizing: border-box;
		height: 35px;
		padding: 0 4px;
		overflow: hidden;
		white-space: nowrap;
		text-align: right;
		border-right: 2px solid #dadbde;
		border-bottom: 2px solid #dadbde;
	}
	th {
		padding: 0;
		font-size: 22px;
		font-weight: 400;
		text-align: center;
		color: #3d3f45;
		background: #e1e3e8;
		border-color: #b2b4ba;
	}
	thead th {
		height: 33px;
		line-height: 27px;
		border-top: 2px solid #8d9096;
		border-bottom-color: #9fa2a8;
	}
	/* row pitch averages out between 35 and 36 */
	tbody tr:nth-child(7n + 2) > *,
	tbody tr:nth-child(7n + 4) > *,
	tbody tr:nth-child(7n + 6) > * {
		height: 36px;
	}
	.corner svg {
		display: block;
		margin-left: auto;
		margin-right: 8px;
	}
	.bold td {
		font-weight: 600;
		text-align: left;
	}
	.chart {
		position: absolute;
		left: 1094px;
		top: 109px;
		font-size: 21px;
		fill: #222;
	}

	.vscroll {
		box-sizing: border-box;
		display: flex;
		flex-direction: column;
		width: 33px;
		border-right: 2px solid #8d9096;
		background: #e0e4ea;
	}
	.vscroll .split {
		height: 11px;
		border: 3px solid #85888e;
		background: linear-gradient(#85888e, #85888e) center / 14px 2px no-repeat #fff;
	}
	.vscroll button {
		height: 33px;
	}
	.vscroll .down {
		height: 40px;
		margin-top: 32px;
	}
	.thumb {
		display: flex;
		align-items: center;
		justify-content: center;
		gap: 2px;
		box-sizing: border-box;
		border: 2px solid #8d9096;
		border-radius: 3px;
	}
	.vscroll .thumb {
		flex: 1;
		flex-direction: column;
		background: linear-gradient(90deg, #f8f9fa, #dfe1e6);
	}
	.vscroll .thumb i {
		width: 16px;
		height: 2px;
		background: #85888e;
	}
	.edge {
		width: 5px;
		background: #fff;
	}

	.sheetbar {
		display: flex;
		height: 30px;
		border-top: 2px solid #a5a7ab;
		border-bottom: 2px solid #8d9096;
		background: #dfe3e9;
	}
	.steps {
		display: flex;
		width: 121px;
		border-right: 2px solid #a5a7ab;
		fill: #33343a;
	}
	.steps button {
		flex: 1;
	}
	.sheettab {
		padding-left: 4px;
		padding-right: 9px;
		background: #e4e6e9;
		font-size: 24px;
		line-height: 28px;
		color: #5a5c63;
	}
	.sheettab.current {
		padding-left: 18px;
		background: #fff;
		font-weight: 700;
		color: #3d3f45;
	}
	.hscroll {
		display: flex;
		width: 39%;
		margin-left: auto;
		margin-right: 38px;
	}
	.hscroll .split {
		box-sizing: border-box;
		width: 15px;
		border: 3px solid #85888e;
		background: linear-gradient(#85888e, #85888e) center / 2px 14px no-repeat #fff;
	}
	.hscroll button {
		width: 36px;
	}
	.track {
		flex: 1;
		display: flex;
	}
	.track .thumb {
		width: 89%;
		background: linear-gradient(#f8f9fa, #dfe1e6);
	}
	.track .thumb i {
		width: 2px;
		height: 14px;
		background: #85888e;
	}

	.status {
		display: flex;
		align-items: center;
		height: 41px;
		padding-right: 8px;
		background: linear-gradient(#f1f2f4, #d3d5da 50%, #bec0c6);
	}
	.status .bar {
		height: 38px;
		background: #8d9096;
	}
	.ready {
		padding: 0 18px 0 16px;
	}
	.views {
		display: flex;
		align-items: center;
		gap: 2px;
		margin-left: auto;
	}
	.views button {
		width: 36px;
		height: 37px;
	}
	.views .bar {
		margin-right: 6px;
	}
	.views .on {
		box-sizing: border-box;
		border: 2px solid #c39540;
		border-radius: 4px;
		background: #ffdf6e;
	}
	.percentage {
		padding: 0 29px 0 16px;
	}
	.round {
		box-sizing: border-box;
		width: 31px;
		height: 31px;
		border: 2px solid #6b6d72;
		border-radius: 50%;
		background: #f4f5f7;
	}
	input[type='range'] {
		appearance: none;
		width: 197px;
		height: 28px;
		background: linear-gradient(#85888e, #85888e) center / 100% 2px no-repeat;
	}
	input[type='range']::-webkit-slider-thumb {
		appearance: none;
		width: 18px;
		height: 26px;
		background: url("data:image/svg+xml,%3Csvg xmlns='http://www.w3.org/2000/svg' viewBox='0 0 18 26'%3E%3Cpath d='M1 1h16v16l-8 8-8-8z' fill='%23fff' stroke='%2355585e' stroke-width='2'/%3E%3C/svg%3E");
	}
</style>
